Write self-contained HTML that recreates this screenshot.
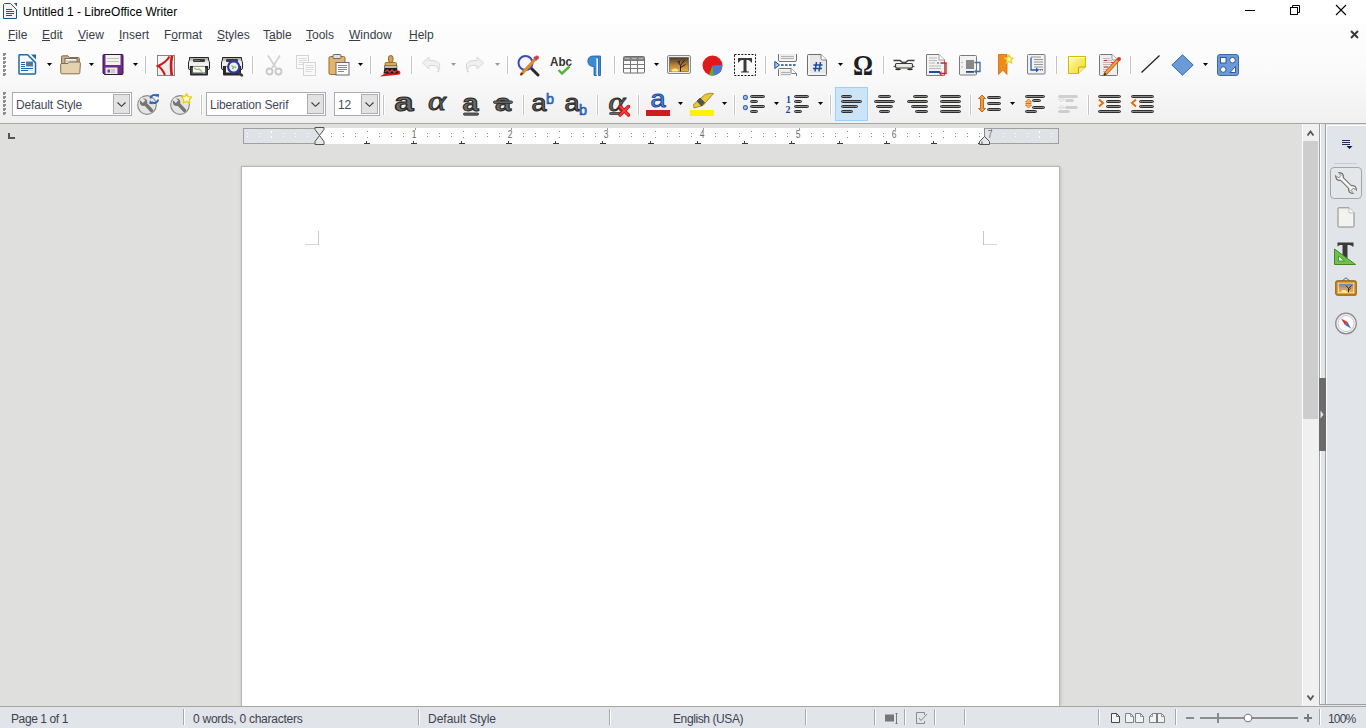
<!DOCTYPE html>
<html><head><meta charset="utf-8">
<style>
html,body{margin:0;padding:0}
body{width:1366px;height:728px;overflow:hidden;position:relative;font-family:"Liberation Sans",sans-serif;font-size:12px;background:#dfdfdd}
.a{position:absolute}
.t{position:absolute;white-space:pre;line-height:14px}
svg{position:absolute;overflow:visible}
.sep{position:absolute;width:1px;background:#c9c9c9;border-right:1px solid #fff}
.combo{position:absolute;height:22px;top:92px;background:#fff;border:1px solid #a9acb3;box-sizing:content-box}
.cbtn{position:absolute;top:1px;width:15px;height:18px;background:#e2e2e2;border:1px solid #adadad}
.u{text-decoration:underline;text-underline-offset:1px}
</style></head><body>
<!-- title bar -->
<div class="a" style="left:0;top:0;width:1366px;height:24px;background:#fff"></div>
<div class="t" style="left:23px;top:5px;color:#000">Untitled 1 - LibreOffice Writer</div>
<!-- menu + toolbars bg -->
<div class="a" style="left:0;top:24px;width:1366px;height:99px;background:linear-gradient(#fdfdfd,#fcfcfc 30%,#f8f8f8 60%,#f3f3f3 85%,#f0f0f0)"></div>
<div class="a" style="left:0;top:123px;width:1366px;height:1px;background:#a5a5a5"></div>
<!-- menu -->
<div class="t" style="left:8px;top:28px;color:#383c48"><span class="u">F</span>ile</div>
<div class="t" style="left:42px;top:28px;color:#383c48"><span class="u">E</span>dit</div>
<div class="t" style="left:78px;top:28px;color:#383c48"><span class="u">V</span>iew</div>
<div class="t" style="left:119px;top:28px;color:#383c48"><span class="u">I</span>nsert</div>
<div class="t" style="left:164px;top:28px;color:#383c48">F<span class="u">o</span>rmat</div>
<div class="t" style="left:217px;top:28px;color:#383c48"><span class="u">S</span>tyles</div>
<div class="t" style="left:263px;top:28px;color:#383c48">T<span class="u">a</span>ble</div>
<div class="t" style="left:306px;top:28px;color:#383c48"><span class="u">T</span>ools</div>
<div class="t" style="left:349px;top:28px;color:#383c48"><span class="u">W</span>indow</div>
<div class="t" style="left:409px;top:28px;color:#383c48"><span class="u">H</span>elp</div>

<!-- toolbar 2 combos -->
<div class="combo" style="left:12px;width:118px"><div class="t" style="left:3px;top:5px;color:#454957;letter-spacing:-0.15px">Default Style</div><div class="cbtn" style="left:100px"><svg style="left:3px;top:7px" width="9" height="5" viewBox="0 0 9 5"><path d="M0.5 0.5L4.5 4.3L8.5 0.5" stroke="#3a3a3a" stroke-width="1.1" fill="none"/></svg></div></div>
<div class="combo" style="left:206px;width:118px"><div class="t" style="left:3px;top:5px;color:#454957;letter-spacing:-0.15px">Liberation Serif</div><div class="cbtn" style="left:100px"><svg style="left:3px;top:7px" width="9" height="5" viewBox="0 0 9 5"><path d="M0.5 0.5L4.5 4.3L8.5 0.5" stroke="#3a3a3a" stroke-width="1.1" fill="none"/></svg></div></div>
<div class="combo" style="left:334px;width:44px"><div class="t" style="left:3px;top:5px;color:#454957;letter-spacing:-0.15px">12</div><div class="cbtn" style="left:26px"><svg style="left:3px;top:7px" width="9" height="5" viewBox="0 0 9 5"><path d="M0.5 0.5L4.5 4.3L8.5 0.5" stroke="#3a3a3a" stroke-width="1.1" fill="none"/></svg></div></div>

<!-- workspace: tab icon -->
<div class="a" style="left:8px;top:133px;width:2px;height:6px;background:#555"></div>
<div class="a" style="left:8px;top:137px;width:7px;height:2px;background:#555"></div>

<!-- ruler -->
<div class="a" style="left:243px;top:128px;width:76px;height:16px;background:#dfe3e8;border:1px solid #a0a0a0;border-right:0;box-sizing:border-box"></div>
<div class="a" style="left:319px;top:128px;width:665px;height:16px;background:#fff"></div>
<div class="a" style="left:984px;top:128px;width:75px;height:16px;background:#dfe3e8;border:1px solid #a0a0a0;border-left:0;box-sizing:border-box"></div>

<!-- page -->
<div class="a" style="left:242px;top:167px;width:817px;height:540px;background:#fff;box-shadow:0 0 1px 1px #b8b8b8, 2px 0 3px #c4c4c4, -2px 1px 3px #d4d4d4"></div>
<div class="a" style="left:318px;top:231px;width:1px;height:14px;background:#c8c8c8"></div>
<div class="a" style="left:305px;top:244px;width:13px;height:1px;background:#d6d6d6"></div>
<div class="a" style="left:983px;top:231px;width:1px;height:14px;background:#c8c8c8"></div>
<div class="a" style="left:984px;top:244px;width:13px;height:1px;background:#d6d6d6"></div>

<!-- scrollbar -->
<div class="a" style="left:1302px;top:124px;width:1px;height:582px;background:#fff"></div>
<div class="a" style="left:1303px;top:124px;width:16px;height:582px;background:#f0f0f0"></div>
<div class="a" style="left:1303px;top:141px;width:15px;height:278px;background:#cdcdcd"></div>

<!-- sidebar -->
<div class="a" style="left:1319px;top:124px;width:47px;height:582px;background:#e1e4e8"></div>
<div class="a" style="left:1319px;top:124px;width:1px;height:581px;background:#a0a0a0"></div>
<div class="a" style="left:1320px;top:124px;width:1px;height:581px;background:#fff"></div>
<div class="a" style="left:1325px;top:124px;width:1px;height:581px;background:#a0a0a0"></div>
<div class="a" style="left:1326px;top:125px;width:1px;height:580px;background:#fff"></div>
<div class="a" style="left:1326px;top:125px;width:40px;height:1px;background:#fff"></div>
<div class="a" style="left:1319px;top:704px;width:47px;height:1px;background:#a0a0a0"></div>
<div class="a" style="left:1319px;top:378px;width:7px;height:73px;background:#6b6b6b"></div>
<div class="a" style="left:1334px;top:163px;width:23px;height:1px;background:#c8cbcf"></div>
<div class="a" style="left:1330px;top:167px;width:30px;height:30px;border:1px solid #a3a5a8;border-radius:4px;background:#e4e7ea"></div>

<!-- status bar -->
<div class="a" style="left:0;top:706px;width:1366px;height:1px;background:#a5a5a5"></div>
<div class="a" style="left:0;top:707px;width:1366px;height:21px;background:#e1e4e8"></div>
<div class="t" style="left:11px;top:712px;color:#3d4252;letter-spacing:-0.4px">Page 1 of 1</div>
<div class="t" style="left:193px;top:712px;color:#3d4252;letter-spacing:-0.25px">0 words, 0 characters</div>
<div class="t" style="left:428px;top:712px;color:#3d4252">Default Style</div>
<div class="t" style="left:673px;top:712px;color:#3d4252;letter-spacing:-0.4px">English (USA)</div>
<div class="t" style="left:1328px;top:712px;color:#3d4252;letter-spacing:-0.8px">100%</div>
<div class="a" style="left:331px;top:133px;width:1px;height:1px;background:#8a8a8a"></div>
<div class="a" style="left:331px;top:136px;width:1px;height:1px;background:#8a8a8a"></div>
<div class="a" style="left:343px;top:133px;width:1px;height:1px;background:#8a8a8a"></div>
<div class="a" style="left:343px;top:136px;width:1px;height:1px;background:#8a8a8a"></div>
<div class="a" style="left:355px;top:133px;width:1px;height:1px;background:#8a8a8a"></div>
<div class="a" style="left:355px;top:136px;width:1px;height:1px;background:#8a8a8a"></div>
<div class="a" style="left:367px;top:131px;width:1px;height:1px;background:#8a8a8a"></div>
<div class="a" style="left:367px;top:137px;width:1px;height:1px;background:#8a8a8a"></div>
<div class="a" style="left:379px;top:133px;width:1px;height:1px;background:#8a8a8a"></div>
<div class="a" style="left:379px;top:136px;width:1px;height:1px;background:#8a8a8a"></div>
<div class="a" style="left:391px;top:133px;width:1px;height:1px;background:#8a8a8a"></div>
<div class="a" style="left:391px;top:136px;width:1px;height:1px;background:#8a8a8a"></div>
<div class="a" style="left:403px;top:133px;width:1px;height:1px;background:#8a8a8a"></div>
<div class="a" style="left:403px;top:136px;width:1px;height:1px;background:#8a8a8a"></div>
<div class="a" style="left:427px;top:133px;width:1px;height:1px;background:#8a8a8a"></div>
<div class="a" style="left:427px;top:136px;width:1px;height:1px;background:#8a8a8a"></div>
<div class="a" style="left:439px;top:133px;width:1px;height:1px;background:#8a8a8a"></div>
<div class="a" style="left:439px;top:136px;width:1px;height:1px;background:#8a8a8a"></div>
<div class="a" style="left:451px;top:133px;width:1px;height:1px;background:#8a8a8a"></div>
<div class="a" style="left:451px;top:136px;width:1px;height:1px;background:#8a8a8a"></div>
<div class="a" style="left:463px;top:131px;width:1px;height:1px;background:#8a8a8a"></div>
<div class="a" style="left:463px;top:137px;width:1px;height:1px;background:#8a8a8a"></div>
<div class="a" style="left:475px;top:133px;width:1px;height:1px;background:#8a8a8a"></div>
<div class="a" style="left:475px;top:136px;width:1px;height:1px;background:#8a8a8a"></div>
<div class="a" style="left:487px;top:133px;width:1px;height:1px;background:#8a8a8a"></div>
<div class="a" style="left:487px;top:136px;width:1px;height:1px;background:#8a8a8a"></div>
<div class="a" style="left:499px;top:133px;width:1px;height:1px;background:#8a8a8a"></div>
<div class="a" style="left:499px;top:136px;width:1px;height:1px;background:#8a8a8a"></div>
<div class="a" style="left:523px;top:133px;width:1px;height:1px;background:#8a8a8a"></div>
<div class="a" style="left:523px;top:136px;width:1px;height:1px;background:#8a8a8a"></div>
<div class="a" style="left:535px;top:133px;width:1px;height:1px;background:#8a8a8a"></div>
<div class="a" style="left:535px;top:136px;width:1px;height:1px;background:#8a8a8a"></div>
<div class="a" style="left:547px;top:133px;width:1px;height:1px;background:#8a8a8a"></div>
<div class="a" style="left:547px;top:136px;width:1px;height:1px;background:#8a8a8a"></div>
<div class="a" style="left:559px;top:131px;width:1px;height:1px;background:#8a8a8a"></div>
<div class="a" style="left:559px;top:137px;width:1px;height:1px;background:#8a8a8a"></div>
<div class="a" style="left:571px;top:133px;width:1px;height:1px;background:#8a8a8a"></div>
<div class="a" style="left:571px;top:136px;width:1px;height:1px;background:#8a8a8a"></div>
<div class="a" style="left:583px;top:133px;width:1px;height:1px;background:#8a8a8a"></div>
<div class="a" style="left:583px;top:136px;width:1px;height:1px;background:#8a8a8a"></div>
<div class="a" style="left:595px;top:133px;width:1px;height:1px;background:#8a8a8a"></div>
<div class="a" style="left:595px;top:136px;width:1px;height:1px;background:#8a8a8a"></div>
<div class="a" style="left:619px;top:133px;width:1px;height:1px;background:#8a8a8a"></div>
<div class="a" style="left:619px;top:136px;width:1px;height:1px;background:#8a8a8a"></div>
<div class="a" style="left:631px;top:133px;width:1px;height:1px;background:#8a8a8a"></div>
<div class="a" style="left:631px;top:136px;width:1px;height:1px;background:#8a8a8a"></div>
<div class="a" style="left:643px;top:133px;width:1px;height:1px;background:#8a8a8a"></div>
<div class="a" style="left:643px;top:136px;width:1px;height:1px;background:#8a8a8a"></div>
<div class="a" style="left:655px;top:131px;width:1px;height:1px;background:#8a8a8a"></div>
<div class="a" style="left:655px;top:137px;width:1px;height:1px;background:#8a8a8a"></div>
<div class="a" style="left:667px;top:133px;width:1px;height:1px;background:#8a8a8a"></div>
<div class="a" style="left:667px;top:136px;width:1px;height:1px;background:#8a8a8a"></div>
<div class="a" style="left:679px;top:133px;width:1px;height:1px;background:#8a8a8a"></div>
<div class="a" style="left:679px;top:136px;width:1px;height:1px;background:#8a8a8a"></div>
<div class="a" style="left:691px;top:133px;width:1px;height:1px;background:#8a8a8a"></div>
<div class="a" style="left:691px;top:136px;width:1px;height:1px;background:#8a8a8a"></div>
<div class="a" style="left:715px;top:133px;width:1px;height:1px;background:#8a8a8a"></div>
<div class="a" style="left:715px;top:136px;width:1px;height:1px;background:#8a8a8a"></div>
<div class="a" style="left:727px;top:133px;width:1px;height:1px;background:#8a8a8a"></div>
<div class="a" style="left:727px;top:136px;width:1px;height:1px;background:#8a8a8a"></div>
<div class="a" style="left:739px;top:133px;width:1px;height:1px;background:#8a8a8a"></div>
<div class="a" style="left:739px;top:136px;width:1px;height:1px;background:#8a8a8a"></div>
<div class="a" style="left:751px;top:131px;width:1px;height:1px;background:#8a8a8a"></div>
<div class="a" style="left:751px;top:137px;width:1px;height:1px;background:#8a8a8a"></div>
<div class="a" style="left:763px;top:133px;width:1px;height:1px;background:#8a8a8a"></div>
<div class="a" style="left:763px;top:136px;width:1px;height:1px;background:#8a8a8a"></div>
<div class="a" style="left:775px;top:133px;width:1px;height:1px;background:#8a8a8a"></div>
<div class="a" style="left:775px;top:136px;width:1px;height:1px;background:#8a8a8a"></div>
<div class="a" style="left:787px;top:133px;width:1px;height:1px;background:#8a8a8a"></div>
<div class="a" style="left:787px;top:136px;width:1px;height:1px;background:#8a8a8a"></div>
<div class="a" style="left:811px;top:133px;width:1px;height:1px;background:#8a8a8a"></div>
<div class="a" style="left:811px;top:136px;width:1px;height:1px;background:#8a8a8a"></div>
<div class="a" style="left:823px;top:133px;width:1px;height:1px;background:#8a8a8a"></div>
<div class="a" style="left:823px;top:136px;width:1px;height:1px;background:#8a8a8a"></div>
<div class="a" style="left:835px;top:133px;width:1px;height:1px;background:#8a8a8a"></div>
<div class="a" style="left:835px;top:136px;width:1px;height:1px;background:#8a8a8a"></div>
<div class="a" style="left:847px;top:131px;width:1px;height:1px;background:#8a8a8a"></div>
<div class="a" style="left:847px;top:137px;width:1px;height:1px;background:#8a8a8a"></div>
<div class="a" style="left:859px;top:133px;width:1px;height:1px;background:#8a8a8a"></div>
<div class="a" style="left:859px;top:136px;width:1px;height:1px;background:#8a8a8a"></div>
<div class="a" style="left:871px;top:133px;width:1px;height:1px;background:#8a8a8a"></div>
<div class="a" style="left:871px;top:136px;width:1px;height:1px;background:#8a8a8a"></div>
<div class="a" style="left:883px;top:133px;width:1px;height:1px;background:#8a8a8a"></div>
<div class="a" style="left:883px;top:136px;width:1px;height:1px;background:#8a8a8a"></div>
<div class="a" style="left:907px;top:133px;width:1px;height:1px;background:#8a8a8a"></div>
<div class="a" style="left:907px;top:136px;width:1px;height:1px;background:#8a8a8a"></div>
<div class="a" style="left:919px;top:133px;width:1px;height:1px;background:#8a8a8a"></div>
<div class="a" style="left:919px;top:136px;width:1px;height:1px;background:#8a8a8a"></div>
<div class="a" style="left:931px;top:133px;width:1px;height:1px;background:#8a8a8a"></div>
<div class="a" style="left:931px;top:136px;width:1px;height:1px;background:#8a8a8a"></div>
<div class="a" style="left:943px;top:131px;width:1px;height:1px;background:#8a8a8a"></div>
<div class="a" style="left:943px;top:137px;width:1px;height:1px;background:#8a8a8a"></div>
<div class="a" style="left:955px;top:133px;width:1px;height:1px;background:#8a8a8a"></div>
<div class="a" style="left:955px;top:136px;width:1px;height:1px;background:#8a8a8a"></div>
<div class="a" style="left:967px;top:133px;width:1px;height:1px;background:#8a8a8a"></div>
<div class="a" style="left:967px;top:136px;width:1px;height:1px;background:#8a8a8a"></div>
<div class="a" style="left:979px;top:133px;width:1px;height:1px;background:#8a8a8a"></div>
<div class="a" style="left:979px;top:136px;width:1px;height:1px;background:#8a8a8a"></div>
<div class="a" style="left:307px;top:133px;width:1px;height:1px;background:#fff"></div>
<div class="a" style="left:307px;top:136px;width:1px;height:1px;background:#fff"></div>
<div class="a" style="left:295px;top:133px;width:1px;height:1px;background:#fff"></div>
<div class="a" style="left:295px;top:136px;width:1px;height:1px;background:#fff"></div>
<div class="a" style="left:283px;top:133px;width:1px;height:1px;background:#fff"></div>
<div class="a" style="left:283px;top:136px;width:1px;height:1px;background:#fff"></div>
<div class="a" style="left:271px;top:131px;width:1px;height:2px;background:#fff"></div>
<div class="a" style="left:271px;top:136px;width:1px;height:2px;background:#fff"></div>
<div class="a" style="left:259px;top:133px;width:1px;height:1px;background:#fff"></div>
<div class="a" style="left:259px;top:136px;width:1px;height:1px;background:#fff"></div>
<div class="a" style="left:247px;top:133px;width:1px;height:1px;background:#fff"></div>
<div class="a" style="left:247px;top:136px;width:1px;height:1px;background:#fff"></div>
<div class="a" style="left:1003px;top:133px;width:1px;height:1px;background:#fff"></div>
<div class="a" style="left:1003px;top:136px;width:1px;height:1px;background:#fff"></div>
<div class="a" style="left:1015px;top:133px;width:1px;height:1px;background:#fff"></div>
<div class="a" style="left:1015px;top:136px;width:1px;height:1px;background:#fff"></div>
<div class="a" style="left:1027px;top:133px;width:1px;height:1px;background:#fff"></div>
<div class="a" style="left:1027px;top:136px;width:1px;height:1px;background:#fff"></div>
<div class="a" style="left:1039px;top:131px;width:1px;height:2px;background:#fff"></div>
<div class="a" style="left:1039px;top:136px;width:1px;height:2px;background:#fff"></div>
<div class="a" style="left:1051px;top:133px;width:1px;height:1px;background:#fff"></div>
<div class="a" style="left:1051px;top:136px;width:1px;height:1px;background:#fff"></div>
<div class="t" style="left:404px;top:129px;width:20px;text-align:center;font-size:10px;line-height:12px;color:#6a6a6a;transform:scaleX(0.85)">1</div>
<div class="a" style="left:415px;top:128px;width:1px;height:2px;background:#9a9a9a"></div>
<div class="t" style="left:500px;top:129px;width:20px;text-align:center;font-size:10px;line-height:12px;color:#6a6a6a;transform:scaleX(0.85)">2</div>
<div class="a" style="left:511px;top:128px;width:1px;height:2px;background:#9a9a9a"></div>
<div class="t" style="left:596px;top:129px;width:20px;text-align:center;font-size:10px;line-height:12px;color:#6a6a6a;transform:scaleX(0.85)">3</div>
<div class="a" style="left:607px;top:128px;width:1px;height:2px;background:#9a9a9a"></div>
<div class="t" style="left:692px;top:129px;width:20px;text-align:center;font-size:10px;line-height:12px;color:#6a6a6a;transform:scaleX(0.85)">4</div>
<div class="a" style="left:703px;top:128px;width:1px;height:2px;background:#9a9a9a"></div>
<div class="t" style="left:788px;top:129px;width:20px;text-align:center;font-size:10px;line-height:12px;color:#6a6a6a;transform:scaleX(0.85)">5</div>
<div class="a" style="left:799px;top:128px;width:1px;height:2px;background:#9a9a9a"></div>
<div class="t" style="left:884px;top:129px;width:20px;text-align:center;font-size:10px;line-height:12px;color:#6a6a6a;transform:scaleX(0.85)">6</div>
<div class="a" style="left:895px;top:128px;width:1px;height:2px;background:#9a9a9a"></div>
<div class="t" style="left:980px;top:129px;width:20px;text-align:center;font-size:10px;line-height:12px;color:#6a6a6a;transform:scaleX(0.85)">7</div>
<div class="a" style="left:991px;top:128px;width:1px;height:2px;background:#9a9a9a"></div>
<div class="a" style="left:366px;top:141px;width:1px;height:2px;background:#3a3a3a"></div>
<div class="a" style="left:364px;top:143px;width:6px;height:1px;background:#3a3a3a"></div>
<div class="a" style="left:413px;top:141px;width:1px;height:2px;background:#3a3a3a"></div>
<div class="a" style="left:411px;top:143px;width:6px;height:1px;background:#3a3a3a"></div>
<div class="a" style="left:461px;top:141px;width:1px;height:2px;background:#3a3a3a"></div>
<div class="a" style="left:459px;top:143px;width:6px;height:1px;background:#3a3a3a"></div>
<div class="a" style="left:508px;top:141px;width:1px;height:2px;background:#3a3a3a"></div>
<div class="a" style="left:506px;top:143px;width:6px;height:1px;background:#3a3a3a"></div>
<div class="a" style="left:555px;top:141px;width:1px;height:2px;background:#3a3a3a"></div>
<div class="a" style="left:553px;top:143px;width:6px;height:1px;background:#3a3a3a"></div>
<div class="a" style="left:602px;top:141px;width:1px;height:2px;background:#3a3a3a"></div>
<div class="a" style="left:600px;top:143px;width:6px;height:1px;background:#3a3a3a"></div>
<div class="a" style="left:650px;top:141px;width:1px;height:2px;background:#3a3a3a"></div>
<div class="a" style="left:648px;top:143px;width:6px;height:1px;background:#3a3a3a"></div>
<div class="a" style="left:697px;top:141px;width:1px;height:2px;background:#3a3a3a"></div>
<div class="a" style="left:695px;top:143px;width:6px;height:1px;background:#3a3a3a"></div>
<div class="a" style="left:744px;top:141px;width:1px;height:2px;background:#3a3a3a"></div>
<div class="a" style="left:742px;top:143px;width:6px;height:1px;background:#3a3a3a"></div>
<div class="a" style="left:791px;top:141px;width:1px;height:2px;background:#3a3a3a"></div>
<div class="a" style="left:789px;top:143px;width:6px;height:1px;background:#3a3a3a"></div>
<div class="a" style="left:839px;top:141px;width:1px;height:2px;background:#3a3a3a"></div>
<div class="a" style="left:837px;top:143px;width:6px;height:1px;background:#3a3a3a"></div>
<div class="a" style="left:886px;top:141px;width:1px;height:2px;background:#3a3a3a"></div>
<div class="a" style="left:884px;top:143px;width:6px;height:1px;background:#3a3a3a"></div>
<div class="a" style="left:933px;top:141px;width:1px;height:2px;background:#3a3a3a"></div>
<div class="a" style="left:931px;top:143px;width:6px;height:1px;background:#3a3a3a"></div>
<div class="a" style="left:980px;top:141px;width:1px;height:2px;background:#3a3a3a"></div>
<div class="a" style="left:978px;top:143px;width:6px;height:1px;background:#3a3a3a"></div>
<div class="a" style="left:984px;top:128px;width:1px;height:9px;background:#8a8a8a"></div>
<svg style="left:314px;top:127px" width="11" height="18" viewBox="0 0 11 18"><path d="M1 0.5H10V2.5L5.5 8.5L10 14.5V17.5H1V14.5L5.5 8.5L1 2.5Z" fill="#e8e8e8" stroke="#505050" stroke-width="1"/></svg>
<svg style="left:979px;top:136px" width="11" height="9" viewBox="0 0 11 9"><path d="M0.5 5.5L5.5 0.5L10.5 5.5V8.5H0.5Z" fill="#e8e8e8" stroke="#505050" stroke-width="1"/><path d="M3 5.5V8.5" stroke="#505050" stroke-width="1"/></svg><svg style="left:3px;top:53px" width="3" height="24" viewBox="0 0 3 24"><rect x="0" y="0" width="3" height="2" fill="#8e8e8e"/><rect x="0" y="2" width="2" height="1" fill="#8e8e8e"/><rect x="0" y="4" width="3" height="2" fill="#8e8e8e"/><rect x="0" y="6" width="2" height="1" fill="#8e8e8e"/><rect x="0" y="8" width="3" height="2" fill="#8e8e8e"/><rect x="0" y="10" width="2" height="1" fill="#8e8e8e"/><rect x="0" y="12" width="3" height="2" fill="#8e8e8e"/><rect x="0" y="14" width="2" height="1" fill="#8e8e8e"/><rect x="0" y="16" width="3" height="2" fill="#8e8e8e"/><rect x="0" y="18" width="2" height="1" fill="#8e8e8e"/><rect x="0" y="20" width="3" height="2" fill="#8e8e8e"/><rect x="0" y="22" width="2" height="1" fill="#8e8e8e"/></svg>
<svg style="left:18px;top:54px" width="19" height="21" viewBox="0 0 19 21">
<path d="M1 1.5Q1 0.8 1.7 0.8H9.6L17.5 8.6V19.3Q17.5 20 16.8 20H1.7Q1 20 1 19.3Z" fill="#fafafa" stroke="#1f6aa0" stroke-width="1.5"/>
<path d="M13 0.5H18V5.5Z" fill="#1f6aa0"/>
<rect x="3" y="8" width="4" height="1" fill="#1a66a8"/><rect x="3" y="10" width="4" height="1" fill="#1a66a8"/><rect x="3" y="12" width="4" height="1" fill="#1a66a8"/>
<rect x="3" y="14" width="12" height="1" fill="#1a66a8"/><rect x="3" y="16" width="7" height="1" fill="#1a66a8"/><rect x="10" y="16" width="5" height="1" fill="#d8d8d8"/>
<rect x="8" y="7.5" width="7" height="5" fill="#2a8ad8"/><rect x="9" y="8.5" width="5" height="3" fill="#7a6a5a"/></svg>
<svg style="left:47.0px;top:63px" width="5" height="3" viewBox="0 0 5 3"><path d="M0 0H5L2.5 3Z" fill="#000"/></svg>
<svg style="left:60px;top:55px" width="21" height="20" viewBox="0 0 21 20">
<path d="M1.5 2Q1.5 0.8 2.5 0.8H8L9.5 2.5H18.5Q19.3 2.5 19.3 3.5V17H1.5Z" fill="#c9b089" stroke="#8a6e45" stroke-width="1"/>
<rect x="5" y="3.5" width="12" height="7" fill="#f4f4f4" stroke="#606060" stroke-width="0.9"/>
<rect x="6" y="5.5" width="10" height="2" fill="#c8c8c8"/>
<path d="M0.6 9.5Q0.6 8.5 1.6 8.5H8L9.5 7H19Q20.4 7 20.4 8.2L19.8 17.8Q19.8 18.8 18.8 18.8H1.8Q0.8 18.8 0.8 17.8Z" fill="#e3d1b0" stroke="#8a6e45" stroke-width="1"/></svg>
<svg style="left:89.0px;top:63px" width="5" height="3" viewBox="0 0 5 3"><path d="M0 0H5L2.5 3Z" fill="#000"/></svg>
<svg style="left:102px;top:54px" width="22" height="21" viewBox="0 0 22 21">
<path d="M1 1.5Q1 0.5 2 0.5H20Q21 0.5 21 1.5V19.5Q21 20.5 20 20.5H2.5L1 19Z" fill="#6b2c8c" stroke="#3e1050" stroke-width="1"/>
<rect x="3.5" y="1" width="15" height="10" fill="#f2f2ee"/>
<rect x="5" y="4" width="12" height="0.8" fill="#b8b8a8"/><rect x="5" y="7" width="12" height="0.8" fill="#b8b8a8"/>
<rect x="3.5" y="13.5" width="12" height="6.5" fill="#e8e8e4"/>
<rect x="5.5" y="15.5" width="2.5" height="3" fill="#6a4a7a"/><rect x="9" y="15" width="4" height="4" fill="#c8c8c8"/></svg>
<svg style="left:133.0px;top:63px" width="5" height="3" viewBox="0 0 5 3"><path d="M0 0H5L2.5 3Z" fill="#000"/></svg>
<div class="a" style="left:145px;top:56px;width:1px;height:18px;background:#c3c3c3;box-shadow:1px 0 0 #fff,-1px 0 0 #fff"></div>
<svg style="left:157px;top:55px" width="18" height="21" viewBox="0 0 18 21">
<defs><linearGradient id="pdfg" x1="0" y1="0" x2="1" y2="1"><stop offset="0" stop-color="#fafafa"/><stop offset="1" stop-color="#e4e4e4"/></linearGradient></defs>
<rect x="0.5" y="0.5" width="17" height="20" fill="url(#pdfg)" stroke="#858585" stroke-width="1"/>
<path d="M12.5 1.5Q9 7.5 1 11Q4.5 12.5 8 20" fill="none" stroke="#d01818" stroke-width="2"/>
<path d="M15 0.8Q13.2 10 14.8 20.5" fill="none" stroke="#d01818" stroke-width="2.6"/></svg>
<svg style="left:188px;top:57px" width="22" height="19" viewBox="0 0 22 19">
<defs><linearGradient id="prg" x1="0" y1="0" x2="0" y2="1"><stop offset="0" stop-color="#9a9a98"/><stop offset="0.35" stop-color="#e8e8e4"/><stop offset="0.6" stop-color="#f4f4f0"/><stop offset="1" stop-color="#b8b8b4"/></linearGradient></defs>
<path d="M1.5 0.5H20.5V3Q21.5 4 21.5 6V11.5Q21.5 12.5 20 12.5H2Q0.5 12.5 0.5 11.5V6Q0.5 4 1.5 3Z" fill="url(#prg)" stroke="#262626" stroke-width="1"/>
<rect x="5" y="2" width="12" height="3" rx="1" fill="#3c3c3c"/>
<circle cx="7" cy="3.5" r="0.6" fill="#aaa"/><circle cx="9" cy="3.5" r="0.6" fill="#aaa"/><circle cx="11" cy="3.5" r="0.6" fill="#aaa"/>
<path d="M2 9H20V17.5Q20 18.5 19 18.5H3Q2 18.5 2 17.5Z" fill="#2a2a2a"/>
<rect x="3.5" y="11" width="15" height="6" fill="#5a5a5a"/>
<rect x="5" y="9.5" width="12" height="6" fill="#f8f8f4"/>
<path d="M6 11L9 12.5L11 12L14 14.5" stroke="#8ac47a" stroke-width="1.2" fill="none"/>
<rect x="15" y="16" width="2" height="1" fill="#5a9ae0"/></svg>
<svg style="left:221px;top:57px" width="22" height="19" viewBox="0 0 22 19">
<path d="M1.5 0.5H20.5V3Q21.5 4 21.5 6V11.5Q21.5 12.5 20 12.5H2Q0.5 12.5 0.5 11.5V6Q0.5 4 1.5 3Z" fill="url(#prg)" stroke="#262626" stroke-width="1"/>
<rect x="5" y="2" width="12" height="3" rx="1" fill="#3c3c3c"/>
<path d="M2 9H20V17.5Q20 18.5 19 18.5H3Q2 18.5 2 17.5Z" fill="#2a2a2a"/>
<rect x="5" y="9.5" width="10" height="6" fill="#f8f8f4"/>
<path d="M16.5 14.5L21 18.5" stroke="#3a3a36" stroke-width="2.4" stroke-linecap="round"/>
<circle cx="12.7" cy="10" r="5.6" fill="#eef2ea" stroke="#2c38a8" stroke-width="2.2"/>
<path d="M10.5 8.5L12.5 10L11.5 12M13.5 9.5L15 11" stroke="#7ab86a" stroke-width="1.5" fill="none"/></svg>
<div class="a" style="left:252px;top:56px;width:1px;height:18px;background:#c3c3c3;box-shadow:1px 0 0 #fff,-1px 0 0 #fff"></div>
<svg style="left:265px;top:55px" width="18" height="21" viewBox="0 0 18 21">
<path d="M3 0.5L11 13M15 0.5L7 13" stroke="#d0d0d0" stroke-width="1.6" fill="none"/>
<circle cx="4.5" cy="16.5" r="3" fill="none" stroke="#c8c8c8" stroke-width="1.8"/>
<circle cx="13.5" cy="16.5" r="3" fill="none" stroke="#c8c8c8" stroke-width="1.8"/></svg>
<svg style="left:296px;top:55px" width="20" height="21" viewBox="0 0 20 21">
<rect x="0.5" y="0.5" width="12" height="13" fill="#fafafa" stroke="#d4d4d4" stroke-width="1"/>
<path d="M2.5 3.5H10.5M2.5 5.5H10.5M2.5 7.5H10.5M2.5 9.5H8.5" stroke="#dadada" stroke-width="1"/>
<rect x="7.5" y="7.5" width="12" height="13" fill="#fafafa" stroke="#d4d4d4" stroke-width="1"/>
<path d="M9.5 10.5H17.5M9.5 12.5H17.5M9.5 14.5H17.5M9.5 16.5H15.5" stroke="#dadada" stroke-width="1"/></svg>
<svg style="left:328px;top:54px" width="22" height="22" viewBox="0 0 22 22">
<rect x="1" y="2.5" width="16" height="18" rx="1.5" fill="#e2b46e" stroke="#9a6a28" stroke-width="1"/>
<rect x="5" y="0.5" width="8" height="4" rx="1" fill="#e0e0dc" stroke="#6a6a6a" stroke-width="1"/>
<rect x="8" y="8.5" width="13" height="12.5" fill="#fbfbfb" stroke="#6a6a6a" stroke-width="1"/>
<path d="M10 11.5H19M10 13.5H19M10 15.5H19M10 17.5H16" stroke="#7a7a7a" stroke-width="0.9"/></svg>
<svg style="left:358.0px;top:63px" width="5" height="3" viewBox="0 0 5 3"><path d="M0 0H5L2.5 3Z" fill="#000"/></svg>
<div class="a" style="left:370px;top:56px;width:1px;height:18px;background:#c3c3c3;box-shadow:1px 0 0 #fff,-1px 0 0 #fff"></div>
<svg style="left:380px;top:55px" width="23" height="22" viewBox="0 0 23 22">
<path d="M0 21.5Q5 18 11 16.5L19 15.5Q21.5 17.5 19.5 19.5Q12 20.5 0 21.5Z" fill="#e01818"/>
<rect x="8.5" y="0.5" width="4.5" height="7" rx="2.2" fill="#d2a050" stroke="#8a5e20" stroke-width="0.9"/>
<path d="M6 7.5H15.5Q16.5 7.5 16.5 8.5V11H5V8.5Q5 7.5 6 7.5Z" fill="#dcaa52" stroke="#8a5e20" stroke-width="0.8"/>
<rect x="4.5" y="11" width="12.5" height="2" fill="#f0f0f0" stroke="#444" stroke-width="0.6"/>
<path d="M4.5 13H17L18 18.5H3.5Z" fill="#1a1a1a"/>
<path d="M5 17L7.5 15L9.5 17.5L12 15L14.5 17.5L16.5 15.5" stroke="#e03a3a" stroke-width="1.3" fill="none"/></svg>
<div class="a" style="left:411px;top:56px;width:1px;height:18px;background:#c3c3c3;box-shadow:1px 0 0 #fff,-1px 0 0 #fff"></div>
<svg style="left:421px;top:56px" width="21" height="17" viewBox="0 0 21 17">
<path d="M8 1L1.5 7L8 13V9.5H13Q17 9.5 17.5 13.5Q18.5 16.5 16.5 16Q20 12 18.5 8Q16.5 4.5 12 4.5H8Z" fill="#f0f0f0" stroke="#d8d8d8" stroke-width="1"/></svg>
<svg style="left:451.0px;top:63px" width="5" height="3" viewBox="0 0 5 3"><path d="M0 0H5L2.5 3Z" fill="#9a9a9a"/></svg>
<svg style="left:464px;top:56px" width="21" height="17" viewBox="0 0 21 17">
<path d="M13 1L19.5 7L13 13V9.5H8Q4 9.5 3.5 13.5Q2.5 16.5 4.5 16Q1 12 2.5 8Q4.5 4.5 9 4.5H13Z" fill="#f0f0f0" stroke="#d8d8d8" stroke-width="1"/></svg>
<svg style="left:495.0px;top:63px" width="5" height="3" viewBox="0 0 5 3"><path d="M0 0H5L2.5 3Z" fill="#9a9a9a"/></svg>
<div class="a" style="left:507px;top:56px;width:1px;height:18px;background:#c3c3c3;box-shadow:1px 0 0 #fff,-1px 0 0 #fff"></div>
<svg style="left:517px;top:54px" width="23" height="22" viewBox="0 0 23 22">
<path d="M14 14L21 21" stroke="#2a2a2a" stroke-width="3" stroke-linecap="round"/>
<circle cx="8.5" cy="9" r="7" fill="#f4f6fb" stroke="#3a4eb0" stroke-width="2"/>
<path d="M4.5 20L19 4.5" stroke="#e28a2a" stroke-width="3.2" stroke-linecap="round"/>
<path d="M17 3L20 6" stroke="#777" stroke-width="2.5"/>
<circle cx="20" cy="3.5" r="2" fill="#e23a3a"/>
<path d="M3.5 21L5.5 19" stroke="#2a2a2a" stroke-width="1.2"/></svg>
<svg style="left:550px;top:55px" width="22" height="21" viewBox="0 0 22 21">
<text x="0" y="10.5" font-family="Liberation Sans" font-weight="bold" font-size="13" textLength="22" lengthAdjust="spacingAndGlyphs" fill="#333">Abc</text>
<path d="M8.5 15L12 18.5L19.5 11.5" stroke="#fff" stroke-width="3.6" fill="none"/>
<path d="M8.5 15L12 18.5L19.5 11.5" stroke="#52b43a" stroke-width="2.4" fill="none"/></svg>
<svg style="left:587px;top:55px" width="14" height="21" viewBox="0 0 14 21">
<path d="M6.5 1H13.5V20.5H11.5V3H9.5V20.5H7V11.5Q1 11.5 0.8 6Q1 1 6.5 1Z" fill="#3a8ad8" stroke="#1a5aa0" stroke-width="0.8"/>
<path d="M9.8 3V20" stroke="#e8f2fc" stroke-width="1"/></svg>
<div class="a" style="left:614px;top:56px;width:1px;height:18px;background:#c3c3c3;box-shadow:1px 0 0 #fff,-1px 0 0 #fff"></div>
<svg style="left:623px;top:56px" width="22" height="18" viewBox="0 0 22 18">
<rect x="0.5" y="0.5" width="21" height="16.5" rx="1" fill="#fafafa" stroke="#6e6e6e" stroke-width="1"/>
<rect x="1" y="1" width="20" height="3.5" fill="#8a8a8a"/>
<path d="M7.5 1V17M14.5 1V17M1 4.5H21M1 8.5H21M1 12.5H21" stroke="#7a7a7a" stroke-width="1"/>
<path d="M2 2.5H6.5M9 2.5H13.5M16 2.5H20" stroke="#b4b4b4" stroke-width="1"/></svg>
<svg style="left:654.0px;top:63px" width="5" height="3" viewBox="0 0 5 3"><path d="M0 0H5L2.5 3Z" fill="#000"/></svg>
<svg style="left:667px;top:55px" width="24" height="19" viewBox="0 0 24 19">
<rect x="0.5" y="0.5" width="23" height="18" rx="1.5" fill="#eeeeec" stroke="#8a8a8a" stroke-width="1"/>
<defs><linearGradient id="sky" x1="0" y1="0" x2="0" y2="1"><stop offset="0" stop-color="#4a3a2a"/><stop offset="0.55" stop-color="#b8823a"/><stop offset="1" stop-color="#f4b030"/></linearGradient><clipPath id="imgc"><rect x="2.5" y="2.5" width="19" height="14"/></clipPath></defs>
<rect x="2.5" y="2.5" width="19" height="14" fill="url(#sky)" stroke="#555" stroke-width="0.6"/>
<g clip-path="url(#imgc)"><circle cx="8" cy="17" r="3.5" fill="#fde890"/></g>
<path d="M13.5 16.5V10.5L10.5 6M13.5 10.5L17.5 5M13.5 12.5L18.5 9.5M11.8 8L13 5.5" stroke="#1e1e1e" stroke-width="1" fill="none"/></svg>
<svg style="left:702px;top:55px" width="21" height="21" viewBox="0 0 21 21">
<circle cx="10.5" cy="10.5" r="10" fill="#e01a1a"/>
<path d="M10.5 10.5L20.5 10L19 16.5Q16 20 12 20.5Z" fill="#4a7ad0"/>
<path d="M10.5 10.5L12 20.5Q9 21 7 20Z" fill="#5ab03a"/></svg>
<svg style="left:734px;top:54px" width="22" height="22" viewBox="0 0 22 22">
<rect x="0.5" y="0.5" width="21" height="21" fill="none" stroke="#111" stroke-width="1" stroke-dasharray="2 1.4"/>
<path d="M4 4H18V8.5H17Q16.5 6 14 6H12.5V16.5Q12.5 17.5 14 17.5H15V18.5H7V17.5H8Q9.5 17.5 9.5 16.5V6H8Q5.5 6 5 8.5H4Z" fill="#3a3a3a"/></svg>
<div class="a" style="left:765px;top:56px;width:1px;height:18px;background:#c3c3c3;box-shadow:1px 0 0 #fff,-1px 0 0 #fff"></div>
<svg style="left:774px;top:54px" width="23" height="22" viewBox="0 0 23 22">
<path d="M4.5 0V6Q4.5 7.5 6 7.5H21Q22.5 7.5 22.5 6V0" fill="#fafafa" stroke="#707070" stroke-width="1"/>
<rect x="6" y="0" width="14.5" height="6" fill="#ececec"/>
<path d="M7 2.5H20M7 4.5H20" stroke="#a4a4a4" stroke-width="0.8"/>
<path d="M4.5 22V15.5Q4.5 14.5 5.5 14.5H17L22.5 19.5V22" fill="#fafafa" stroke="#707070" stroke-width="1"/>
<rect x="6" y="16" width="11" height="6" fill="#ececec"/>
<path d="M17 14.5V18.5Q17 19.5 18 19.5H22.5" fill="#fff" stroke="#707070" stroke-width="0.9"/>
<path d="M7 18.5H16M7 20.5H17" stroke="#a4a4a4" stroke-width="0.8"/>
<path d="M0.8 7.5L5.5 11L0.8 14.5Z" fill="#a8c8f0" stroke="#1e4a9a" stroke-width="1"/>
<path d="M7 11H22.5" stroke="#1e4a9a" stroke-width="1.6" stroke-dasharray="2.6 1.4"/></svg>
<svg style="left:807px;top:54px" width="20" height="22" viewBox="0 0 20 22">
<path d="M1.5 0.5H14L19.5 6V20.5Q19.5 21.5 18.5 21.5H1.5Q0.5 21.5 0.5 20.5V1.5Q0.5 0.5 1.5 0.5Z" fill="#e8e8e8" stroke="#6e6e6e" stroke-width="1"/>
<path d="M14 0.5V4.5Q14 6 15.5 6H19.5" fill="#fff" stroke="#6e6e6e" stroke-width="0.9"/>
<path d="M2 2V20H18" stroke="#fff" stroke-width="1" fill="none"/>
<path d="M9.5 8L8 17.5M13.5 8L12 17.5M6.5 11H15.5M6 14.5H15" stroke="#1e4a9a" stroke-width="1.5"/></svg>
<svg style="left:838.0px;top:63px" width="5" height="3" viewBox="0 0 5 3"><path d="M0 0H5L2.5 3Z" fill="#000"/></svg>
<svg style="left:853px;top:55px" width="20" height="21" viewBox="0 0 20 21">
<text x="0" y="20" font-family="Liberation Serif" font-weight="bold" font-size="29" textLength="20" lengthAdjust="spacingAndGlyphs" fill="#1e1e1e">&#937;</text></svg>
<div class="a" style="left:883px;top:56px;width:1px;height:18px;background:#c3c3c3;box-shadow:1px 0 0 #fff,-1px 0 0 #fff"></div>
<svg style="left:893px;top:59px" width="22" height="12" viewBox="0 0 22 12">
<path d="M0.5 1.5H7L9.5 3.5H12.5L15 1.5H21.5" stroke="#3e3e3e" stroke-width="1.3" fill="none"/>
<path d="M0.5 7.5H21.5" stroke="#5a5a5a" stroke-width="1.2"/>
<ellipse cx="5" cy="10.3" rx="2.8" ry="1" fill="#2a2a2a"/><ellipse cx="17" cy="10.3" rx="2.8" ry="1" fill="#2a2a2a"/>
<path d="M3.5 4.5H18.5Q19.5 4.5 19.5 5.5V7.5Q19.5 9 18 9H4Q2.5 9 2.5 7.5V5.5Q2.5 4.5 3.5 4.5Z" fill="#e8e8e6" stroke="#3a3a3a" stroke-width="1.1"/></svg>
<svg style="left:926px;top:54px" width="22" height="22" viewBox="0 0 22 22">
<path d="M0.5 0.5H13L18.5 6V21.5H0.5Z" fill="#f2f2f2" stroke="#7a7a7a" stroke-width="1"/>
<path d="M13 0.5V6H18.5" fill="#fff" stroke="#8a8a8a" stroke-width="0.8"/>
<path d="M3 4H11M3 6.5H11M3 9H9M3 12H15M3 14.5H15" stroke="#aaa" stroke-width="0.8"/>
<path d="M11 9H13" stroke="#2a5ab0" stroke-width="1.2"/>
<rect x="3" y="17" width="11" height="2" fill="#2a4a9a"/>
<path d="M14.5 9H20V19.5H15.5" stroke="#e01a1a" stroke-width="1.4" fill="none"/>
<path d="M15.5 17L13 19.5L15.5 22Z" fill="#e01a1a"/></svg>
<svg style="left:959px;top:55px" width="23" height="21" viewBox="0 0 23 21">
<rect x="0.5" y="0.5" width="17" height="19.5" rx="1" fill="#f2f2f2" stroke="#7a7a7a" stroke-width="1"/>
<rect x="7" y="5" width="8" height="9" fill="#888"/>
<circle cx="3" cy="7.5" r="0.7" fill="#999"/><circle cx="3" cy="12" r="0.7" fill="#999"/>
<rect x="7" y="16" width="8" height="1.8" fill="#2a4a9a"/>
<path d="M15.5 7.5H21V16.5H17" stroke="#3a6ab0" stroke-width="1.3" fill="none"/>
<path d="M17.5 14.5L15 16.5L17.5 18.5Z" fill="#3a6ab0"/></svg>
<svg style="left:998px;top:54px" width="16" height="21" viewBox="0 0 16 21">
<path d="M0.5 0.5H9V20.5L4.75 16L0.5 20.5Z" fill="#f08a1a" stroke="#d06a0a" stroke-width="0.8"/>
<path d="M11 1L12.3 3.8L15.2 4.1L13 6L13.7 9L11 7.5L8.3 9L9 6L6.8 4.1L9.7 3.8Z" fill="#fff6c0" stroke="#e8d020" stroke-width="1.2"/></svg>
<svg style="left:1027px;top:54px" width="19" height="21" viewBox="0 0 19 21">
<rect x="0.5" y="0.5" width="17.5" height="19.5" rx="1" fill="#f2f2f2" stroke="#7a7a7a" stroke-width="1"/>
<path d="M4 3H14M7 5.5H16M7 8H16M7 10.5H16M7 13H16M11 15.5H16" stroke="#8a8a8a" stroke-width="0.9"/>
<path d="M4 3.5V16H9" stroke="#2a5ab0" stroke-width="1.3" fill="none"/>
<path d="M9 13.5L12 16L9 18.5Z" fill="#2a5ab0"/>
<path d="M13 16H16" stroke="#2a5ab0" stroke-width="1" stroke-dasharray="1 1"/></svg>
<div class="a" style="left:1056px;top:56px;width:1px;height:18px;background:#c3c3c3;box-shadow:1px 0 0 #fff,-1px 0 0 #fff"></div>
<svg style="left:1068px;top:56px" width="19" height="19" viewBox="0 0 19 19">
<defs><linearGradient id="cmg" x1="0" y1="0" x2="1" y2="1"><stop offset="0" stop-color="#fffbd0"/><stop offset="0.5" stop-color="#f8ea60"/><stop offset="1" stop-color="#f0dc30"/></linearGradient></defs>
<path d="M0.5 0.5H17.5V11L10.5 17.5H0.5Z" fill="url(#cmg)" stroke="#d4bc00" stroke-width="1"/>
<path d="M1.5 1.5H16.5" stroke="#fff" stroke-width="1"/>
<path d="M10.5 17.5V11.5Q10.5 11 11 11H17.5" fill="#f4e890" stroke="#c0a800" stroke-width="1"/></svg>
<svg style="left:1099px;top:54px" width="23" height="22" viewBox="0 0 23 22">
<path d="M1.5 0.5H13L18.5 6V20.5Q18.5 21.5 17.5 21.5H1.5Q0.5 21.5 0.5 20.5V1.5Q0.5 0.5 1.5 0.5Z" fill="#eeeeee" stroke="#777" stroke-width="1"/>
<path d="M13 0.5V4.5Q13 6 14.5 6H18.5" fill="#fff" stroke="#888" stroke-width="0.9"/>
<path d="M4 4.5H11M4 6.5H13M4 8.5H15M4 10.5H15M4 13H15M4 15.5H12M4 17.5H11" stroke="#b4b4b4" stroke-width="0.9"/>
<path d="M5 6.5H8M12 8.5H15M5 13H9" stroke="#e82020" stroke-width="1.1"/>
<path d="M6.5 19.5L19 6" stroke="#b05a10" stroke-width="3.6" stroke-linecap="round"/>
<path d="M6.5 19.5L19 6" stroke="#f0a040" stroke-width="2.2" stroke-linecap="round"/>
<circle cx="20" cy="5" r="2" fill="#e83030"/>
<path d="M4.8 21.2L6.8 19.2" stroke="#2a2a2a" stroke-width="1.6"/></svg>
<div class="a" style="left:1130px;top:56px;width:1px;height:18px;background:#c3c3c3;box-shadow:1px 0 0 #fff,-1px 0 0 #fff"></div>
<svg style="left:1141px;top:55px" width="19" height="18" viewBox="0 0 19 18"><path d="M0.5 17.5L18.5 0.5" stroke="#1e1e1e" stroke-width="1.2"/></svg>
<svg style="left:1171px;top:54px" width="23" height="22" viewBox="0 0 23 22">
<path d="M11.5 0.8L22.2 11L11.5 21.2L0.8 11Z" fill="#6a9ad8" stroke="#3a6ab0" stroke-width="1"/></svg>
<svg style="left:1203.0px;top:63px" width="5" height="3" viewBox="0 0 5 3"><path d="M0 0H5L2.5 3Z" fill="#000"/></svg>
<svg style="left:1217px;top:54px" width="22" height="22" viewBox="0 0 22 22">
<rect x="0.5" y="0.5" width="21" height="21" rx="2.5" fill="#6a9ad8" stroke="#3a6ab0" stroke-width="1"/>
<rect x="3.5" y="3.5" width="5.5" height="5.5" fill="#fff" stroke="#2a4a8a" stroke-width="0.9"/>
<circle cx="15.5" cy="6.2" r="2.8" fill="#fff" stroke="#2a4a8a" stroke-width="0.9"/>
<circle cx="6.2" cy="15.5" r="2.8" fill="#fff" stroke="#2a4a8a" stroke-width="0.9"/>
<path d="M13 18.5H18.5V12.5Z" fill="#fff" stroke="#2a4a8a" stroke-width="0.9"/></svg>
<svg style="left:3px;top:92px" width="3" height="24" viewBox="0 0 3 24"><rect x="0" y="0" width="3" height="2" fill="#8e8e8e"/><rect x="0" y="2" width="2" height="1" fill="#8e8e8e"/><rect x="0" y="4" width="3" height="2" fill="#8e8e8e"/><rect x="0" y="6" width="2" height="1" fill="#8e8e8e"/><rect x="0" y="8" width="3" height="2" fill="#8e8e8e"/><rect x="0" y="10" width="2" height="1" fill="#8e8e8e"/><rect x="0" y="12" width="3" height="2" fill="#8e8e8e"/><rect x="0" y="14" width="2" height="1" fill="#8e8e8e"/><rect x="0" y="16" width="3" height="2" fill="#8e8e8e"/><rect x="0" y="18" width="2" height="1" fill="#8e8e8e"/><rect x="0" y="20" width="3" height="2" fill="#8e8e8e"/><rect x="0" y="22" width="2" height="1" fill="#8e8e8e"/></svg>
<div class="a" style="left:201px;top:95px;width:1px;height:20px;background:#c3c3c3;box-shadow:1px 0 0 #fff,-1px 0 0 #fff"></div>
<div class="a" style="left:383px;top:95px;width:1px;height:20px;background:#c3c3c3;box-shadow:1px 0 0 #fff,-1px 0 0 #fff"></div>
<div class="a" style="left:523px;top:95px;width:1px;height:20px;background:#c3c3c3;box-shadow:1px 0 0 #fff,-1px 0 0 #fff"></div>
<div class="a" style="left:597px;top:95px;width:1px;height:20px;background:#c3c3c3;box-shadow:1px 0 0 #fff,-1px 0 0 #fff"></div>
<div class="a" style="left:638px;top:95px;width:1px;height:20px;background:#c3c3c3;box-shadow:1px 0 0 #fff,-1px 0 0 #fff"></div>
<div class="a" style="left:734px;top:95px;width:1px;height:20px;background:#c3c3c3;box-shadow:1px 0 0 #fff,-1px 0 0 #fff"></div>
<div class="a" style="left:830px;top:95px;width:1px;height:20px;background:#c3c3c3;box-shadow:1px 0 0 #fff,-1px 0 0 #fff"></div>
<div class="a" style="left:970px;top:95px;width:1px;height:20px;background:#c3c3c3;box-shadow:1px 0 0 #fff,-1px 0 0 #fff"></div>
<div class="a" style="left:1088px;top:95px;width:1px;height:20px;background:#c3c3c3;box-shadow:1px 0 0 #fff,-1px 0 0 #fff"></div>
<svg style="left:137px;top:93px" width="23" height="23" viewBox="0 0 23 23"><circle cx="10" cy="12" r="9.3" fill="#e4e4e2" stroke="#8a8a88" stroke-width="1.2"/>
<path d="M8 10.5L14.5 17.5" stroke="#767673" stroke-width="3.4" stroke-linecap="round"/>
<circle cx="6.6" cy="9.2" r="3.7" fill="#767673"/>
<path d="M2.5 6.8L5.8 10L8.3 7.5L5 4.2Z" fill="#e4e4e2"/>
<path d="M13.6 5.5A3.8 3.8 0 0 1 20.2 3.2" stroke="#2a66c0" stroke-width="1.9" fill="none"/>
<path d="M21 6.5A3.8 3.8 0 0 1 14.4 8.8" stroke="#2a66c0" stroke-width="1.9" fill="none"/>
<path d="M18.5 0.8L22.2 1.2L21.5 5Z M15.8 11.2L12.2 10.8L13 7Z" fill="#2a66c0"/></svg>
<svg style="left:170px;top:93px" width="23" height="23" viewBox="0 0 23 23"><circle cx="10" cy="12" r="9.3" fill="#e4e4e2" stroke="#8a8a88" stroke-width="1.2"/>
<path d="M8 10.5L14.5 17.5" stroke="#767673" stroke-width="3.4" stroke-linecap="round"/>
<circle cx="6.6" cy="9.2" r="3.7" fill="#767673"/>
<path d="M2.5 6.8L5.8 10L8.3 7.5L5 4.2Z" fill="#e4e4e2"/>
<path d="M16.5 0.8L18.2 3.6L21.5 4L19.3 6.6L19.8 9.8L16.5 8.4L13.2 9.8L13.7 6.6L11.5 4L14.8 3.6Z" fill="#fffbe0" stroke="#e8d010" stroke-width="1.4" stroke-linejoin="round"/></svg>
<svg style="left:395px;top:96px" width="18" height="15" viewBox="0 0 18 15"><text x="-0.5" y="14.6" font-family="Liberation Sans" font-weight="bold" font-size="26" textLength="19" lengthAdjust="spacingAndGlyphs" fill="#6a6a66" stroke="#262626" stroke-width="1.1">a</text></svg>
<svg style="left:429px;top:96px" width="17" height="15" viewBox="0 0 17 15"><text x="-1" y="14.3" font-family="Liberation Serif" font-style="italic" font-size="27" textLength="18" lengthAdjust="spacingAndGlyphs" fill="#6a6a66" stroke="#2a2a2a" stroke-width="0.9">&#945;</text></svg>
<svg style="left:463px;top:96px" width="16" height="20" viewBox="0 0 16 20"><text x="-0.5" y="14.6" font-family="Liberation Sans" font-weight="bold" font-size="24" textLength="16" lengthAdjust="spacingAndGlyphs" fill="#6a6a66" stroke="#262626" stroke-width="1">a</text>
<rect x="0.5" y="17" width="15" height="2.2" rx="1" fill="#6a6a66" stroke="#262626" stroke-width="0.8"/></svg>
<svg style="left:493px;top:96px" width="20" height="15" viewBox="0 0 20 15"><text x="2" y="14.6" font-family="Liberation Sans" font-weight="bold" font-size="24" textLength="16" lengthAdjust="spacingAndGlyphs" fill="#6a6a66" stroke="#262626" stroke-width="1">a</text>
<rect x="0.5" y="5" width="19" height="2.4" rx="1" fill="#6a6a66" stroke="#262626" stroke-width="0.8"/></svg>
<svg style="left:532px;top:93px" width="23" height="18" viewBox="0 0 23 18"><text x="-0.5" y="17.6" font-family="Liberation Sans" font-size="24" textLength="15" lengthAdjust="spacingAndGlyphs" fill="#6a6a66" stroke="#262626" stroke-width="1">a</text>
<text x="14" y="11" font-family="Liberation Sans" font-size="14" textLength="8" lengthAdjust="spacingAndGlyphs" fill="#4a8ae0" stroke="#1a4aa0" stroke-width="0.6">b</text></svg>
<svg style="left:565px;top:95px" width="23" height="20" viewBox="0 0 23 20"><text x="-0.5" y="15.6" font-family="Liberation Sans" font-size="24" textLength="15" lengthAdjust="spacingAndGlyphs" fill="#6a6a66" stroke="#262626" stroke-width="1">a</text>
<text x="14" y="19.8" font-family="Liberation Sans" font-size="14" textLength="8" lengthAdjust="spacingAndGlyphs" fill="#4a8ae0" stroke="#1a4aa0" stroke-width="0.6">b</text></svg>
<svg style="left:609px;top:96px" width="22" height="20" viewBox="0 0 22 20"><text x="-0.5" y="14.6" font-family="Liberation Serif" font-style="italic" font-size="27" textLength="17" lengthAdjust="spacingAndGlyphs" fill="#6a6a66" stroke="#2a2a2a" stroke-width="0.9">&#945;</text>
<rect x="0.5" y="16.5" width="13" height="2" rx="1" fill="#6a6a66" stroke="#262626" stroke-width="0.7"/>
<path d="M11 10.5L19.5 19M19.5 10.5L11 19" stroke="#c00" stroke-width="3.4" stroke-linecap="round"/>
<path d="M11 10.5L19.5 19M19.5 10.5L11 19" stroke="#ff3a3a" stroke-width="1.8" stroke-linecap="round"/></svg>
<svg style="left:646px;top:93px" width="24" height="23" viewBox="0 0 24 23"><text x="4.5" y="14.3" font-family="Liberation Sans" font-size="24" textLength="15" lengthAdjust="spacingAndGlyphs" fill="#5a90d8" stroke="#1a4aa0" stroke-width="1">a</text>
<rect x="0" y="17" width="24" height="6" fill="#cf1a1e"/></svg>
<svg style="left:678.0px;top:102px" width="5" height="3" viewBox="0 0 5 3"><path d="M0 0H5L2.5 3Z" fill="#000"/></svg>
<svg style="left:690px;top:93px" width="24" height="23" viewBox="0 0 24 23"><path d="M4 15L3.5 11.5L15 1.5Q20 -0.5 23.5 0.5L13 12.5Z" fill="#e8c83a" stroke="#9a7a10" stroke-width="0.8"/>
<path d="M7 8L11.5 13L14.5 9.5L10 5Z" fill="#555" stroke="#333" stroke-width="0.6"/>
<rect x="0" y="17" width="24" height="6" fill="#fff200"/></svg>
<svg style="left:722.0px;top:102px" width="5" height="3" viewBox="0 0 5 3"><path d="M0 0H5L2.5 3Z" fill="#000"/></svg>
<svg style="left:743px;top:95px" width="23" height="19" viewBox="0 0 23 19"><circle cx="2.4" cy="2.4" r="2" fill="#a8c4ea" stroke="#3a6ac0" stroke-width="1.1"/><circle cx="2.4" cy="12.6" r="2" fill="#a8c4ea" stroke="#3a6ac0" stroke-width="1.1"/><rect x="7.5" y="0.5" width="14" height="2" rx="1" fill="#8a8a86" stroke="#2e2e2e" stroke-width="1"/><rect x="7.5" y="5.5" width="7" height="2" rx="1" fill="#8a8a86" stroke="#2e2e2e" stroke-width="1"/><rect x="7.5" y="10.5" width="14" height="2" rx="1" fill="#8a8a86" stroke="#2e2e2e" stroke-width="1"/><rect x="7.5" y="15.5" width="7" height="2" rx="1" fill="#8a8a86" stroke="#2e2e2e" stroke-width="1"/></svg>
<svg style="left:774.0px;top:102px" width="5" height="3" viewBox="0 0 5 3"><path d="M0 0H5L2.5 3Z" fill="#000"/></svg>
<svg style="left:786px;top:95px" width="23" height="19" viewBox="0 0 23 19"><text x="0" y="7.6" font-family="Liberation Serif" font-weight="bold" font-size="10" fill="#1a4a9a">1</text><text x="-0.5" y="17.8" font-family="Liberation Serif" font-weight="bold" font-size="10" fill="#1a4a9a">2</text><rect x="8.5" y="0.5" width="14" height="2" rx="1" fill="#8a8a86" stroke="#2e2e2e" stroke-width="1"/><rect x="8.5" y="5.5" width="7" height="2" rx="1" fill="#8a8a86" stroke="#2e2e2e" stroke-width="1"/><rect x="8.5" y="10.5" width="14" height="2" rx="1" fill="#8a8a86" stroke="#2e2e2e" stroke-width="1"/><rect x="8.5" y="15.5" width="7" height="2" rx="1" fill="#8a8a86" stroke="#2e2e2e" stroke-width="1"/></svg>
<svg style="left:818.0px;top:102px" width="5" height="3" viewBox="0 0 5 3"><path d="M0 0H5L2.5 3Z" fill="#000"/></svg>
<div class="a" style="left:835px;top:87px;width:31px;height:32px;background:#cce4f7;border:1px solid #99d1ff"></div>
<svg style="left:841px;top:95px" width="21" height="19" viewBox="0 0 21 19"><rect x="0.5" y="0.5" width="10" height="2" rx="1" fill="#8a8a86" stroke="#2e2e2e" stroke-width="1"/><rect x="0.5" y="5.5" width="20" height="2" rx="1" fill="#8a8a86" stroke="#2e2e2e" stroke-width="1"/><rect x="0.5" y="10.5" width="16" height="2" rx="1" fill="#8a8a86" stroke="#2e2e2e" stroke-width="1"/><rect x="0.5" y="15.5" width="11" height="2" rx="1" fill="#8a8a86" stroke="#2e2e2e" stroke-width="1"/></svg>
<svg style="left:874px;top:95px" width="21" height="19" viewBox="0 0 21 19"><rect x="4.5" y="0.5" width="12" height="2" rx="1" fill="#8a8a86" stroke="#2e2e2e" stroke-width="1"/><rect x="0.5" y="5.5" width="20" height="2" rx="1" fill="#8a8a86" stroke="#2e2e2e" stroke-width="1"/><rect x="2.5" y="10.5" width="16" height="2" rx="1" fill="#8a8a86" stroke="#2e2e2e" stroke-width="1"/><rect x="5.5" y="15.5" width="10" height="2" rx="1" fill="#8a8a86" stroke="#2e2e2e" stroke-width="1"/></svg>
<svg style="left:907px;top:95px" width="21" height="19" viewBox="0 0 21 19"><rect x="6.5" y="0.5" width="14" height="2" rx="1" fill="#8a8a86" stroke="#2e2e2e" stroke-width="1"/><rect x="0.5" y="5.5" width="20" height="2" rx="1" fill="#8a8a86" stroke="#2e2e2e" stroke-width="1"/><rect x="4.5" y="10.5" width="16" height="2" rx="1" fill="#8a8a86" stroke="#2e2e2e" stroke-width="1"/><rect x="8.5" y="15.5" width="12" height="2" rx="1" fill="#8a8a86" stroke="#2e2e2e" stroke-width="1"/></svg>
<svg style="left:940px;top:95px" width="21" height="19" viewBox="0 0 21 19"><rect x="0.5" y="0.5" width="20" height="2" rx="1" fill="#8a8a86" stroke="#2e2e2e" stroke-width="1"/><rect x="0.5" y="5.5" width="20" height="2" rx="1" fill="#8a8a86" stroke="#2e2e2e" stroke-width="1"/><rect x="0.5" y="10.5" width="20" height="2" rx="1" fill="#8a8a86" stroke="#2e2e2e" stroke-width="1"/><rect x="0.5" y="15.5" width="20" height="2" rx="1" fill="#8a8a86" stroke="#2e2e2e" stroke-width="1"/></svg>
<svg style="left:978px;top:94px" width="23" height="19" viewBox="0 0 23 19"><path d="M4 1L7.5 4.5H5.5V14.5H7.5L4 18L0.5 14.5H2.5V4.5H0.5Z" fill="#e0a050" stroke="#d06a10" stroke-width="1"/><rect x="9.5" y="2.5" width="13" height="2" rx="1" fill="#8a8a86" stroke="#2e2e2e" stroke-width="1"/><rect x="9.5" y="8.5" width="13" height="2" rx="1" fill="#8a8a86" stroke="#2e2e2e" stroke-width="1"/><rect x="9.5" y="14.5" width="13" height="2" rx="1" fill="#8a8a86" stroke="#2e2e2e" stroke-width="1"/></svg>
<svg style="left:1010.0px;top:102px" width="5" height="3" viewBox="0 0 5 3"><path d="M0 0H5L2.5 3Z" fill="#000"/></svg>
<svg style="left:1025px;top:95px" width="21" height="19" viewBox="0 0 21 19"><rect x="0.5" y="0.5" width="19" height="2" rx="1" fill="#8a8a86" stroke="#2e2e2e" stroke-width="1"/><rect x="7.5" y="4.5" width="8" height="2" rx="1" fill="#8a8a86" stroke="#2e2e2e" stroke-width="1"/><rect x="7.5" y="11.5" width="12" height="2" rx="1" fill="#8a8a86" stroke="#2e2e2e" stroke-width="1"/><rect x="0.5" y="15.5" width="11" height="2" rx="1" fill="#8a8a86" stroke="#2e2e2e" stroke-width="1"/><path d="M3.5 4L6.5 7H0.5Z M0.5 10H6.5L3.5 13Z" fill="#f6d0a0" stroke="#e07010" stroke-width="1" stroke-linejoin="round"/><path d="M0.5 8.5H6.5" stroke="#e07010" stroke-width="1"/></svg>
<svg style="left:1058px;top:95px" width="21" height="18" viewBox="0 0 21 18"><g opacity="0.35"><rect x="0.5" y="0.5" width="19" height="2" rx="1" fill="#8a8a86" stroke="#8a8a8a" stroke-width="1"/><rect x="7.5" y="4.5" width="8" height="2" rx="1" fill="#8a8a86" stroke="#8a8a8a" stroke-width="1"/><rect x="7.5" y="11.5" width="12" height="2" rx="1" fill="#8a8a86" stroke="#8a8a8a" stroke-width="1"/><rect x="0.5" y="15.5" width="11" height="2" rx="1" fill="#8a8a86" stroke="#8a8a8a" stroke-width="1"/><path d="M0.5 4H6.5L3.5 7Z M3.5 10L6.5 13H0.5Z" fill="#eee" stroke="#aaa" stroke-width="1"/></g></svg>
<svg style="left:1098px;top:95px" width="23" height="19" viewBox="0 0 23 19"><rect x="0.5" y="0.5" width="22" height="2" rx="1" fill="#8a8a86" stroke="#2e2e2e" stroke-width="1"/><rect x="8.5" y="5.5" width="14" height="2" rx="1" fill="#8a8a86" stroke="#2e2e2e" stroke-width="1"/><rect x="8.5" y="10.5" width="14" height="2" rx="1" fill="#8a8a86" stroke="#2e2e2e" stroke-width="1"/><rect x="0.5" y="15.5" width="22" height="2" rx="1" fill="#8a8a86" stroke="#2e2e2e" stroke-width="1"/><path d="M1 4.5L5 8L1 11.5" stroke="#e07010" stroke-width="2" fill="none"/></svg>
<svg style="left:1131px;top:95px" width="23" height="19" viewBox="0 0 23 19"><rect x="0.5" y="0.5" width="22" height="2" rx="1" fill="#8a8a86" stroke="#2e2e2e" stroke-width="1"/><rect x="8.5" y="5.5" width="14" height="2" rx="1" fill="#8a8a86" stroke="#2e2e2e" stroke-width="1"/><rect x="8.5" y="10.5" width="14" height="2" rx="1" fill="#8a8a86" stroke="#2e2e2e" stroke-width="1"/><rect x="0.5" y="15.5" width="22" height="2" rx="1" fill="#8a8a86" stroke="#2e2e2e" stroke-width="1"/><path d="M5 4.5L1 8L5 11.5" stroke="#e07010" stroke-width="2" fill="none"/></svg>
<svg style="left:3px;top:3px" width="14" height="16" viewBox="0 0 14 16"><path d="M1.5 0.5H7.5L13.5 6.5V15.5H0.5V1.5Z" fill="#f6f2f0" stroke="#0f5a94" stroke-width="1"/>
<path d="M11 0H14V3.5Z" fill="#0f5a94"/>
<path d="M3 6.5H9M3 8.5H11M3 10.5H11M3 12.5H9" stroke="#0f5a94" stroke-width="1"/></svg>
<svg style="left:1245px;top:10px" width="10" height="1" viewBox="0 0 10 1"><rect x="0" y="0" width="10" height="1" fill="#000"/></svg>
<svg style="left:1290px;top:5px" width="10" height="10" viewBox="0 0 10 10"><path d="M2.5 2.5V0.5H9.5V7.5H7.5" fill="none" stroke="#000" stroke-width="1"/><rect x="0.5" y="2.5" width="7" height="7" fill="none" stroke="#000" stroke-width="1"/></svg>
<svg style="left:1336px;top:5px" width="10" height="10" viewBox="0 0 10 10"><path d="M0 0L10 10M10 0L0 10" stroke="#000" stroke-width="1.1"/></svg>
<svg style="left:1350px;top:30px" width="9" height="9" viewBox="0 0 9 9"><path d="M1 1L8 8M8 1L1 8" stroke="#3a3a3a" stroke-width="2"/></svg>
<svg style="left:1342px;top:139px" width="10" height="10" viewBox="0 0 10 10"><path d="M0 1.5H8M0 3.5H8M0 5.5H8" stroke="#1e2e5e" stroke-width="1"/><path d="M4.5 7H10.5L7.5 10Z" fill="#0a1a40"/></svg>
<svg style="left:1335px;top:172px" width="22" height="22" viewBox="0 0 22 22">
<g stroke="#6e6e6a" stroke-width="1.0" fill="none">
<path d="M5.5 5.5L16.5 16.5" stroke-width="4.6" stroke-linecap="round"/>
<circle cx="4.6" cy="4.6" r="4" stroke-width="1" fill="#6e6e6a"/>
<circle cx="17.4" cy="17.4" r="4" stroke-width="1" fill="#6e6e6a"/>
</g>
<g fill="#f6f6f2">
<path d="M5.5 5.5L16.5 16.5" stroke="#f6f6f2" stroke-width="2.8" stroke-linecap="round"/>
<circle cx="4.6" cy="4.6" r="3.1"/>
<circle cx="17.4" cy="17.4" r="3.1"/>
</g>
<path d="M0.5 3L3 0.5L6 3.5L3.5 6Z" fill="#e4e7ea" stroke="#6e6e6a" stroke-width="0.9" stroke-linejoin="round"/>
<path d="M21.5 19L19 21.5L16 18.5L18.5 16Z" fill="#e4e7ea" stroke="#6e6e6a" stroke-width="0.9" stroke-linejoin="round"/>
<path d="M-1 1.5L1.5 -1L4.5 2L2 4.5Z M23 20.5L20.5 23L17.5 20L20 17.5Z" fill="#e4e7ea"/></svg>
<svg style="left:1337px;top:207px" width="18" height="21" viewBox="0 0 18 21"><path d="M1 1.5Q1 0.8 1.7 0.8H12L17 5.8V19Q17 20 16 20H2Q1 20 1 19Z" fill="#f2f2ee" stroke="#8a8a86" stroke-width="1"/><path d="M12 1V5.8H17" fill="#fff" stroke="#aaa" stroke-width="0.7"/></svg>
<svg style="left:1334px;top:242px" width="22" height="23" viewBox="0 0 22 23"><path d="M3.5 0.5H19.5V4.5H18.5Q17.5 3 15.5 3H13.5V16H8.5V3H6.5Q4.5 3 3.5 4.5Z" fill="#3a3a3a"/>
<path d="M0.5 7L21.5 22.5H0.5Z" fill="#6ac04a" stroke="#3a8a2a" stroke-width="1"/>
<path d="M4.5 14L10.5 19H4.5Z" fill="#e8f4e0" stroke="#3a8a2a" stroke-width="0.8"/>
<path d="M3 21.5H20" stroke="#d8a020" stroke-width="1" stroke-dasharray="1 1.5"/></svg>
<svg style="left:1335px;top:277px" width="22" height="19" viewBox="0 0 22 19"><path d="M7 4L11 0.8L15 4" stroke="#555" stroke-width="0.9" fill="none"/>
<rect x="0.8" y="3.8" width="20.4" height="14.4" rx="2" fill="#e8a030" stroke="#8a5a10" stroke-width="1.2"/>
<defs><linearGradient id="sky2" x1="0" y1="0" x2="0" y2="1"><stop offset="0" stop-color="#6a80b0"/><stop offset="0.55" stop-color="#c8a070"/><stop offset="1" stop-color="#f8b030"/></linearGradient><clipPath id="galc"><rect x="3.5" y="6.5" width="15" height="9"/></clipPath></defs>
<rect x="3" y="6" width="16" height="10" fill="#fff"/>
<rect x="3.5" y="6.5" width="15" height="9" fill="url(#sky2)"/>
<g clip-path="url(#galc)"><circle cx="9" cy="16" r="3" fill="#fff4a0"/></g>
<path d="M13.5 15.5V11.5L11 8.5M13.5 11.5L16.5 8.5M13.5 13L15.5 11.5" stroke="#222" stroke-width="0.9" fill="none"/></svg>
<svg style="left:1335px;top:312px" width="22" height="23" viewBox="0 0 22 23"><circle cx="11" cy="11.5" r="10.3" fill="#f0f0f0" stroke="#8a8a8a" stroke-width="1.2"/><circle cx="11" cy="11.5" r="8" fill="#fafafa" stroke="#bbb" stroke-width="0.8"/>
<path d="M6 6.5L12.5 10L10 13Z" fill="#e02a2a"/><path d="M16 16.5L12.5 10L10 13Z" fill="#4a6ab0"/></svg>
<svg style="left:1307px;top:130px" width="7" height="6" viewBox="0 0 7 6"><path d="M0.5 5.5L3.5 1.5L6.5 5.5" stroke="#555" stroke-width="1.8" fill="none"/></svg>
<svg style="left:1307px;top:695px" width="7" height="6" viewBox="0 0 7 6"><path d="M0.5 0.5L3.5 4.5L6.5 0.5" stroke="#555" stroke-width="1.8" fill="none"/></svg>
<svg style="left:1320px;top:410px" width="4" height="9" viewBox="0 0 4 9"><path d="M0.5 0.5L3.5 4.5L0.5 8.5Z" fill="#e4e8ec"/></svg><!-- status separators -->
<div class="sep" style="left:183px;top:709px;height:16px;background:#a8a8a8"></div>
<div class="sep" style="left:418px;top:709px;height:16px;background:#a8a8a8"></div>
<div class="sep" style="left:609px;top:709px;height:16px;background:#a8a8a8"></div>
<div class="sep" style="left:805px;top:709px;height:16px;background:#a8a8a8"></div>
<div class="sep" style="left:874px;top:709px;height:16px;background:#a8a8a8"></div>
<div class="sep" style="left:904px;top:709px;height:16px;background:#a8a8a8"></div>
<div class="sep" style="left:934px;top:709px;height:16px;background:#a8a8a8"></div>
<div class="sep" style="left:964px;top:709px;height:16px;background:#a8a8a8"></div>
<div class="sep" style="left:1098px;top:709px;height:16px;background:#a8a8a8"></div>
<div class="sep" style="left:1175px;top:709px;height:16px;background:#a8a8a8"></div>
<div class="sep" style="left:1319px;top:709px;height:16px;background:#a8a8a8"></div>
<svg style="left:885px;top:713px" width="13" height="11" viewBox="0 0 13 11"><rect x="0" y="1.5" width="9" height="7" fill="#767676"/><path d="M10.5 0.5H12.5M11.5 0.5V10.5M10.5 10.5H12.5" stroke="#767676" stroke-width="1"/></svg>
<svg style="left:916px;top:712px" width="12" height="12" viewBox="0 0 12 12"><path d="M8.5 3V0.5H0.5V11.5H8.5V9" fill="none" stroke="#8a8a8a" stroke-width="1"/><path d="M3 6L5 8.5L11 2" stroke="#8a8a8a" stroke-width="1" fill="none"/></svg>
<svg style="left:1111px;top:713px" width="9" height="10" viewBox="0 0 9 10"><path d="M0.5 0.5H5.5L8.5 3.5V9.5H0.5Z" fill="#f4f4f4" stroke="#444" stroke-width="1"/><path d="M5.5 0.5V3.5H8.5" fill="none" stroke="#444" stroke-width="0.8"/></svg>
<svg style="left:1125px;top:713px" width="19" height="10" viewBox="0 0 19 10"><path d="M0.5 0.5H5.5L8.5 3.5V9.5H0.5Z M10.5 0.5H15.5L18.5 3.5V9.5H10.5Z" fill="#f0f2f4" stroke="#808080" stroke-width="1"/><path d="M5.5 0.5V3.5H8.5M15.5 0.5V3.5H18.5" fill="none" stroke="#808080" stroke-width="0.8"/></svg>
<svg style="left:1149px;top:713px" width="16" height="10" viewBox="0 0 16 10"><path d="M8 0.5H12.5L15.5 3.5V9.5H8Z M8 0.5H3.5L0.5 3.5V9.5H8Z" fill="#f0f2f4" stroke="#808080" stroke-width="1"/><path d="M3.5 0.5V3.5H0.5M12.5 0.5V3.5H15.5" fill="none" stroke="#808080" stroke-width="0.8"/><path d="M8 0.5V9.5" stroke="#6a6a6a" stroke-width="1.4"/></svg>
<div class="a" style="left:1186px;top:717px;width:8px;height:2px;background:#8a8a8a"></div>
<div class="a" style="left:1200px;top:717px;width:98px;height:2px;background:#8e8e8e"></div>
<div class="a" style="left:1217px;top:713px;width:2px;height:10px;background:#8a8a8a"></div>
<svg style="left:1243px;top:713px" width="10" height="10" viewBox="0 0 10 10"><circle cx="5" cy="5" r="3.8" fill="#fff" stroke="#7a7a7a" stroke-width="1.1"/></svg>
<div class="a" style="left:1304px;top:717px;width:8px;height:2px;background:#7a7a7a"></div>
<div class="a" style="left:1307px;top:714px;width:2px;height:8px;background:#7a7a7a"></div>
</body></html>
